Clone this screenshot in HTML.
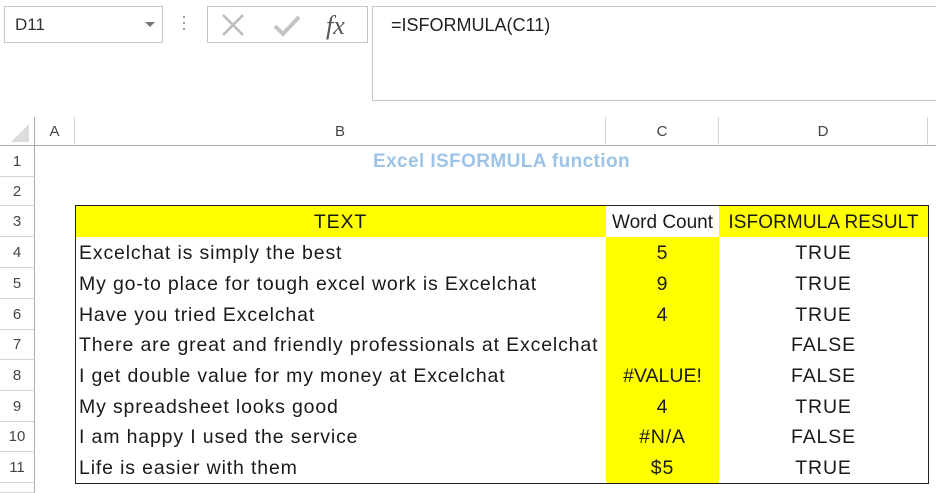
<!DOCTYPE html>
<html><head><style>
*{margin:0;padding:0;box-sizing:border-box}
body{width:936px;height:490px;background:#fff;position:relative;overflow:hidden;font-family:"Liberation Sans",sans-serif;color:#222}
.abs{position:absolute}
.hdr{position:absolute;top:117px;height:29px;background:#fff;border-right:1px solid #d4d4d4;border-bottom:1px solid #ababab;text-align:center;line-height:29px;font-size:15px;color:#444}
.rh{position:absolute;left:0;width:35px;border-right:1px solid #ababab;border-bottom:1px solid #d4d4d4;text-align:center;font-size:15px;color:#444}
.cell{position:absolute;font-size:19.5px;letter-spacing:0.85px;white-space:nowrap;color:#1a1a1a}
</style></head><body>
<div class="abs" style="left:4px;top:6px;width:159px;height:37px;border:1px solid #c6c6c6;font-size:17px;line-height:35px;padding-left:10px;color:#333">D11</div>
<div class="abs" style="left:145px;top:22px;width:0;height:0;border-left:5px solid transparent;border-right:5px solid transparent;border-top:5px solid #777"></div>
<div class="abs" style="left:183px;top:16px;width:2px;height:2px;background:#999;box-shadow:0 6px #999,0 12px #999"></div>
<div class="abs" style="left:207px;top:6px;width:161px;height:37px;border:1px solid #c6c6c6"></div>
<svg class="abs" style="left:220px;top:12px" width="140" height="28"><path d="M3 3 L23 23 M23 3 L3 23" stroke="#bbb" stroke-width="2.5"/><path d="M55 14 L63 22 L79 5" stroke="#c4c4c4" stroke-width="4" fill="none"/><text x="106" y="22" font-family="Liberation Serif" font-style="italic" font-size="26" fill="#555">fx</text></svg>
<div class="abs" style="left:372px;top:6px;width:570px;height:95px;border:1px solid #c6c6c6;font-size:18px;padding:8px 0 0 18px;color:#222">=ISFORMULA(C11)</div>
<div class="hdr" style="left:0;width:35px;border-right:1px solid #ababab"><svg width="22" height="22" style="position:absolute;left:9px;top:5px"><path d="M20 2 L20 20 L2 20Z" fill="#dcdcdc"/></svg></div>
<div class="hdr" style="left:35px;width:40px">A</div>
<div class="hdr" style="left:75px;width:531px">B</div>
<div class="hdr" style="left:606px;width:113px">C</div>
<div class="hdr" style="left:719px;width:209px">D</div>
<div class="hdr" style="left:928px;width:8px;border-right:none"></div>
<div class="rh" style="top:146px;height:31px;line-height:31px">1</div>
<div class="rh" style="top:177px;height:29px;line-height:29px">2</div>
<div class="rh" style="top:206px;height:31px;line-height:31px">3</div>
<div class="rh" style="top:237px;height:31px;line-height:31px">4</div>
<div class="rh" style="top:268px;height:31px;line-height:31px">5</div>
<div class="rh" style="top:299px;height:31px;line-height:31px">6</div>
<div class="rh" style="top:329px;height:31px;line-height:31px">7</div>
<div class="rh" style="top:360px;height:31px;line-height:31px">8</div>
<div class="rh" style="top:391px;height:31px;line-height:31px">9</div>
<div class="rh" style="top:421px;height:31px;line-height:31px">10</div>
<div class="rh" style="top:452px;height:31px;line-height:31px">11</div>
<div class="rh" style="top:483px;height:10px"></div>
<div class="abs" style="left:75px;top:146px;width:853px;height:31px;line-height:31px;text-align:center;font-weight:bold;font-size:19px;letter-spacing:0.4px;color:#9dc3e6">Excel ISFORMULA function</div>
<div class="abs" style="left:75px;top:206px;width:531px;height:31px;background:#ffff00"></div>
<div class="abs" style="left:719px;top:206px;width:209px;height:31px;background:#ffff00"></div>
<div class="abs" style="left:606px;top:237px;width:113px;height:246px;background:#ffff00"></div>
<div class="abs" style="left:75px;top:205px;width:854px;height:279px;border:1.5px solid #222"></div>
<div class="cell" style="left:75px;top:207px;width:531px;line-height:31px;text-align:center">TEXT</div>
<div class="cell" style="left:606px;top:207px;width:113px;line-height:31px;text-align:center;font-size:19px;letter-spacing:0px">Word Count</div>
<div class="cell" style="left:719px;top:207px;width:209px;line-height:31px;text-align:center;font-size:19px;letter-spacing:0.1px">ISFORMULA RESULT</div>
<div style="position:absolute;left:0;top:238px;width:936px">
<div style="position:relative">
<div class="cell" style="left:79px;top:0;line-height:31px">Excelchat is simply the best</div><div class="cell" style="left:606px;top:0;width:113px;text-align:center;line-height:31px">5</div><div class="cell" style="left:719px;top:0;width:209px;text-align:center;line-height:31px">TRUE</div>
<div class="cell" style="left:79px;top:31px;line-height:31px">My go-to place for tough excel work is Excelchat</div><div class="cell" style="left:606px;top:31px;width:113px;text-align:center;line-height:31px">9</div><div class="cell" style="left:719px;top:31px;width:209px;text-align:center;line-height:31px">TRUE</div>
<div class="cell" style="left:79px;top:62px;line-height:31px">Have you tried Excelchat</div><div class="cell" style="left:606px;top:62px;width:113px;text-align:center;line-height:31px">4</div><div class="cell" style="left:719px;top:62px;width:209px;text-align:center;line-height:31px">TRUE</div>
<div class="cell" style="left:79px;top:92px;line-height:31px">There are great and friendly professionals at Excelchat</div><div class="cell" style="left:719px;top:92px;width:209px;text-align:center;line-height:31px">FALSE</div>
<div class="cell" style="left:79px;top:123px;line-height:31px">I get double value for my money at Excelchat</div><div class="cell" style="left:606px;top:123px;width:113px;text-align:center;line-height:31px;letter-spacing:0">#VALUE!</div><div class="cell" style="left:719px;top:123px;width:209px;text-align:center;line-height:31px">FALSE</div>
<div class="cell" style="left:79px;top:154px;line-height:31px">My spreadsheet looks good</div><div class="cell" style="left:606px;top:154px;width:113px;text-align:center;line-height:31px">4</div><div class="cell" style="left:719px;top:154px;width:209px;text-align:center;line-height:31px">TRUE</div>
<div class="cell" style="left:79px;top:184px;line-height:31px">I am happy I used the service</div><div class="cell" style="left:606px;top:184px;width:113px;text-align:center;line-height:31px">#N/A</div><div class="cell" style="left:719px;top:184px;width:209px;text-align:center;line-height:31px">FALSE</div>
<div class="cell" style="left:79px;top:215px;line-height:31px">Life is easier with them</div><div class="cell" style="left:606px;top:215px;width:113px;text-align:center;line-height:31px">$5</div><div class="cell" style="left:719px;top:215px;width:209px;text-align:center;line-height:31px">TRUE</div>
</div></div>
</body></html>
